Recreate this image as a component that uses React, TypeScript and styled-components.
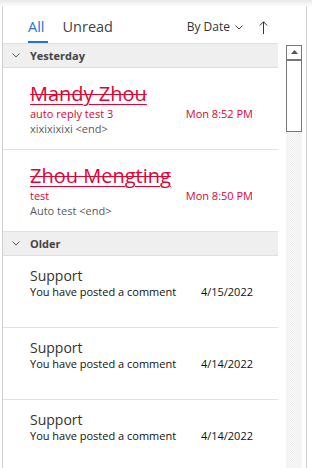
import React from "react";
import styled, { createGlobalStyle, css } from "styled-components";

const Global = createGlobalStyle`
  html, body { margin: 0; padding: 0; background: #ffffff; }
  body { font-family: "Open Sans", "Noto Sans", sans-serif; }
  * { box-sizing: border-box; }
`;

const RED = "#dc0533";

const Window = styled.div`
  width: 312px;
  height: 468px;
  overflow: hidden;
  background: #fff;
  display: flex;
  flex-direction: column;
`;

const TopStrip = styled.div`
  height: 6px;
  flex: none;
  background: linear-gradient(#e9e9e9, #f6f6f6 70%, #fcfcfc);
`;

const Frame = styled.div`
  flex: 1;
  margin-left: 2px;
  width: 305px;
  border-left: 1px solid #cfcfcf;
  border-right: 1px solid #cfcfcf;
  display: flex;
  align-items: stretch;
`;

const ListColumn = styled.div`
  width: 275px;
  flex: none;
  display: flex;
  flex-direction: column;
`;

const TabBar = styled.div`
  height: 38px;
  flex: none;
  display: flex;
  align-items: flex-end;
  padding-left: 25px;
  padding-right: 10px;
  border-bottom: 1px solid #e1e1e1;
`;

const Tab = styled.div<{ $active?: boolean }>`
  font-size: 14.5px;
  line-height: 20px;
  padding: 11px 3px 4px 0;
  margin-right: 15px;
  border-bottom: 2px solid transparent;
  color: #444;
  ${(p) =>
    p.$active &&
    css`
      color: #1f74cf;
      border-bottom-color: #1f74cf;
    `}
`;

const Spacer = styled.div`
  flex: 1;
`;

const SortButton = styled.div`
  display: flex;
  align-items: center;
  gap: 5px;
  font-size: 12px;
  line-height: 16px;
  color: #333;
  padding-bottom: 8px;
`;

const SortDir = styled.div`
  margin-left: 16px;
  padding-bottom: 9px;
  display: flex;
`;

const GroupHeader = styled.div`
  height: 24px;
  flex: none;
  display: flex;
  align-items: center;
  background: #efefef;
  border-bottom: 1px solid #dedede;
  padding-left: 9px;
  gap: 10px;
  font-size: 11px;
  font-weight: 700;
  color: #444;
`;

const MailItem = styled.div<{ $tall?: boolean }>`
  flex: none;
  height: ${(p) => (p.$tall ? 82 : 72)}px;
  border-bottom: 1px solid #e1e1e1;
  padding: ${(p) => (p.$tall ? "14px" : "11px")} 25px 0 27px;
  display: flex;
  flex-direction: column;
`;

const Sender = styled.div<{ $unread?: boolean }>`
  white-space: nowrap;
  ${(p) =>
    p.$unread
      ? css`
          font-size: 20px;
          line-height: 24px;
          color: ${RED};
          text-decoration: underline line-through;
          text-decoration-thickness: 1px;
          text-underline-offset: 3px;
        `
      : css`
          font-size: 14px;
          line-height: 18px;
          color: #333;
        `}
`;

const SubjectRow = styled.div<{ $unread?: boolean }>`
  display: flex;
  justify-content: space-between;
  font-size: 11px;
  line-height: ${(p) => (p.$unread ? 16 : 14)}px;
  color: ${(p) => (p.$unread ? RED : "#111")};
  font-weight: ${(p) => (p.$unread ? 400 : 500)};
`;

const Preview = styled.div`
  font-size: 11px;
  line-height: 14px;
  color: #5a5a5a;
`;

const ScrollColumn = styled.div`
  width: 16px;
  flex: none;
  margin-left: 8px;
  margin-top: 39px;
  display: flex;
  flex-direction: column;
  background: repeating-conic-gradient(#f0f0f0 0 25%, #f8f8f8 0 50%) 0 0 / 2px 2px;
`;

const ScrollUp = styled.div`
  height: 16px;
  border: 1px solid #777;
  border-bottom-width: 2px;
  background: #fff;
  display: flex;
  justify-content: center;
  padding-top: 4px;
`;

const Thumb = styled.div`
  height: 71px;
  border: 1px solid #777;
  border-top: none;
  background: #fff;
`;

const Chevron = ({ w = 8, color = "#555" }: { w?: number; color?: string }) => (
  <svg width={w} height={5} viewBox="0 0 8 5" fill="none">
    <path d="M0.5 0.5 L4 4 L7.5 0.5" stroke={color} strokeWidth="1" />
  </svg>
);

const UpArrow = () => (
  <svg width="9" height="13" viewBox="0 0 9 13" fill="none">
    <path d="M4.5 0.8 V13 M0.8 4.5 L4.5 0.8 L8.2 4.5" stroke="#333" strokeWidth="1" />
  </svg>
);

const Triangle = () => (
  <svg width="7" height="4" viewBox="0 0 7 4">
    <path d="M0 4 L3.5 0 L7 4 Z" fill="#555" />
  </svg>
);

type Mail = { sender: string; subject: string; date: string; preview?: string; unread?: boolean };

const yesterday: Mail[] = [
  { sender: "Mandy Zhou", subject: "auto reply test 3", date: "Mon 8:52 PM", preview: "xixixixixi <end>", unread: true },
  { sender: "Zhou Mengting", subject: "test", date: "Mon 8:50 PM", preview: "Auto test <end>", unread: true },
];

const older: Mail[] = [
  { sender: "Support", subject: "You have posted a comment", date: "4/15/2022" },
  { sender: "Support", subject: "You have posted a comment", date: "4/14/2022" },
  { sender: "Support", subject: "You have posted a comment", date: "4/14/2022" },
];

const MailRow = ({ m }: { m: Mail }) => (
  <MailItem $tall={m.unread}>
    <Sender $unread={m.unread}>{m.sender}</Sender>
    <SubjectRow $unread={m.unread}>
      <span>{m.subject}</span>
      <span>{m.date}</span>
    </SubjectRow>
    {m.preview && <Preview>{m.preview}</Preview>}
  </MailItem>
);

export default function App() {
  return (
    <>
      <Global />
      <Window>
        <TopStrip />
        <Frame>
          <ListColumn>
            <TabBar>
              <Tab $active>All</Tab>
              <Tab>Unread</Tab>
              <Spacer />
              <SortButton>
                By Date <Chevron color="#444" />
              </SortButton>
              <SortDir>
                <UpArrow />
              </SortDir>
            </TabBar>
            <GroupHeader>
              <Chevron />
              Yesterday
            </GroupHeader>
            {yesterday.map((m, i) => (
              <MailRow key={"y" + i} m={m} />
            ))}
            <GroupHeader>
              <Chevron />
              Older
            </GroupHeader>
            {older.map((m, i) => (
              <MailRow key={"o" + i} m={m} />
            ))}
          </ListColumn>
          <ScrollColumn>
            <ScrollUp>
              <Triangle />
            </ScrollUp>
            <Thumb />
          </ScrollColumn>
        </Frame>
      </Window>
    </>
  );
}
